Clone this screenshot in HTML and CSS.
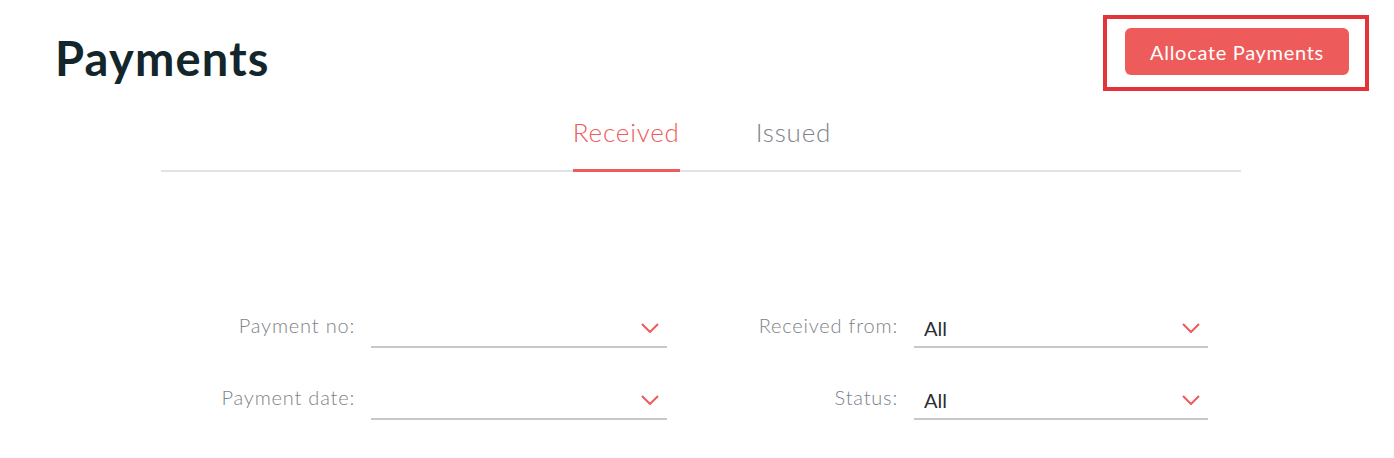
FILE: index.html
```html
<!DOCTYPE html>
<html lang="en">
<head>
<meta charset="utf-8">
<title>Payments</title>
<link rel="stylesheet" href="styles.css">
</head>
<body>
<div class="page">
  <header class="page-head">
    <h1 class="title">Payments</h1>
    <div class="highlight">
      <button class="btn-primary" type="button">Allocate Payments</button>
    </div>
  </header>

  <nav class="tabs">
    <div class="tab-list">
      <a class="tab tab-active">Received</a>
      <a class="tab">Issued</a>
    </div>
  </nav>

  <form class="filters">
    <label class="f-label">Payment no:</label>
    <div class="f-field"><span class="f-value"></span>
      <svg class="chev" viewBox="0 0 18 10" width="18" height="10"><path d="M1 1 L9 9 L17 1" fill="none" stroke="#ee5b5b" stroke-width="2"/></svg>
    </div>
    <label class="f-label">Received from:</label>
    <div class="f-field"><span class="f-value">All</span>
      <svg class="chev" viewBox="0 0 18 10" width="18" height="10"><path d="M1 1 L9 9 L17 1" fill="none" stroke="#ee5b5b" stroke-width="2"/></svg>
    </div>

    <label class="f-label">Payment date:</label>
    <div class="f-field"><span class="f-value"></span>
      <svg class="chev" viewBox="0 0 18 10" width="18" height="10"><path d="M1 1 L9 9 L17 1" fill="none" stroke="#ee5b5b" stroke-width="2"/></svg>
    </div>
    <label class="f-label">Status:</label>
    <div class="f-field"><span class="f-value">All</span>
      <svg class="chev" viewBox="0 0 18 10" width="18" height="10"><path d="M1 1 L9 9 L17 1" fill="none" stroke="#ee5b5b" stroke-width="2"/></svg>
    </div>
  </form>
</div>
</body>
</html>
```

FILE: styles.css
```css
* { box-sizing: border-box; }
html, body { margin: 0; padding: 0; background: #fff; }
body { font-family: Lato, "Noto Sans", sans-serif; color: #13262b; }

.page { width: 1394px; height: 458px; overflow: hidden; }

.page-head {
  display: flex;
  justify-content: space-between;
  align-items: flex-start;
  padding: 15px 25px 0 55px;
  height: 91px;
}
.title {
  margin: 20px 0 0;
  font-size: 47px;
  font-weight: 700;
  line-height: 46px;
  color: #13262b;
  letter-spacing: 1.2px;
}
.highlight {
  border: 4px solid #e3343a;
  padding: 9px 16px 11px 18px;
  width: 266px;
  height: 76px;
}
.btn-primary {
  display: block;
  width: 224px;
  height: 47px;
  border: 0;
  border-radius: 6px;
  background: #ee5b5b;
  color: #fff;
  font-family: Lato, "Noto Sans", sans-serif;
  font-size: 20px;
  font-weight: 400;
  letter-spacing: 0.7px;
  padding: 0;
}

.tabs {
  margin: 0 0 0 161px;
  width: 1080px;
  border-bottom: 2px solid #e1e4e6;
}
.tab-list {
  display: flex;
  justify-content: center;
  gap: 76px;
  padding-left: 2px;
}
.tab {
  display: block;
  font-size: 26px;
  font-weight: 300;
  line-height: 30px;
  padding: 26px 0 22px;
  color: #7f8489;
  margin-bottom: -2px;
  border-bottom: 3px solid transparent;
  letter-spacing: 0.8px;
}
.tab-active {
  color: #ee5b5b;
  border-bottom-color: #ee5b5b;
}

.filters {
  display: grid;
  grid-template-columns: 194px 296px 215px 294px;
  column-gap: 16px;
  row-gap: 34px;
  margin: 138px 0 0 161px;
  align-items: end;
}
.f-label {
  text-align: right;
  font-size: 20px;
  font-weight: 300;
  line-height: 24px;
  color: #7d8287;
  padding-bottom: 11px;
  letter-spacing: 0.8px;
}
.f-field {
  display: flex;
  align-items: center;
  justify-content: space-between;
  height: 38px;
  border-bottom: 2px solid #c6c9cc;
  padding: 0 8px 0 10px;
}
.f-value {
  font-size: 20px;
  color: #2b2f33;
  padding-top: 0;
}
.chev { display: block; margin-top: 0; }
```
